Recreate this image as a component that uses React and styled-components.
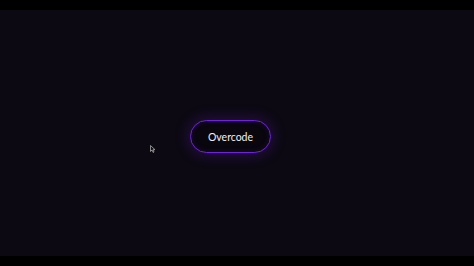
import React from 'react';
import styled, { createGlobalStyle } from 'styled-components';

const Global = createGlobalStyle`
	html, body {
		margin: 0;
		padding: 0;
		background: #000;
		height: 100%;
	}
	#root {
		height: 100%;
	}
`;

const Frame = styled.div`
	height: 266px;
	display: flex;
	flex-direction: column;
	background: #000;
`;

const Stage = styled.main`
	position: relative;
	margin-top: 10px;
	height: 246px;
	background: #0c0912;
	display: flex;
	align-items: center;
	justify-content: center;
	padding: 7px 13px 0 0;
	box-sizing: border-box;
`;

const GlowButton = styled.button`
	width: 81px;
	height: 33px;
	border-radius: 17px;
	border: 1.5px solid #6f24dc;
	background: #09060e;
	color: #f1eef6;
	font-family: 'Lato', 'Noto Sans', sans-serif;
	font-size: 10.5px;
	box-shadow: 0 0 14px 2px rgba(104, 30, 200, 0.3), inset 0 0 6px rgba(104, 30, 200, 0.2);
	cursor: pointer;
`;

const Pointer = styled.svg`
	position: absolute;
	left: 150px;
	top: 135px;
`;

export default function App() {
	return (
		<>
			<Global />
			<Frame>
				<Stage>
					<GlowButton>Overcode</GlowButton>
					<Pointer width='6' height='8' viewBox='0 0 6 8'>
						<path d='M0.5 0.5 L0.5 6.5 L2 5 L3.2 7.5 L4 7 L3 4.7 L5 4.7 Z' fill='#111' stroke='#bbb' strokeWidth='0.7' />
					</Pointer>
				</Stage>
			</Frame>
		</>
	);
}
